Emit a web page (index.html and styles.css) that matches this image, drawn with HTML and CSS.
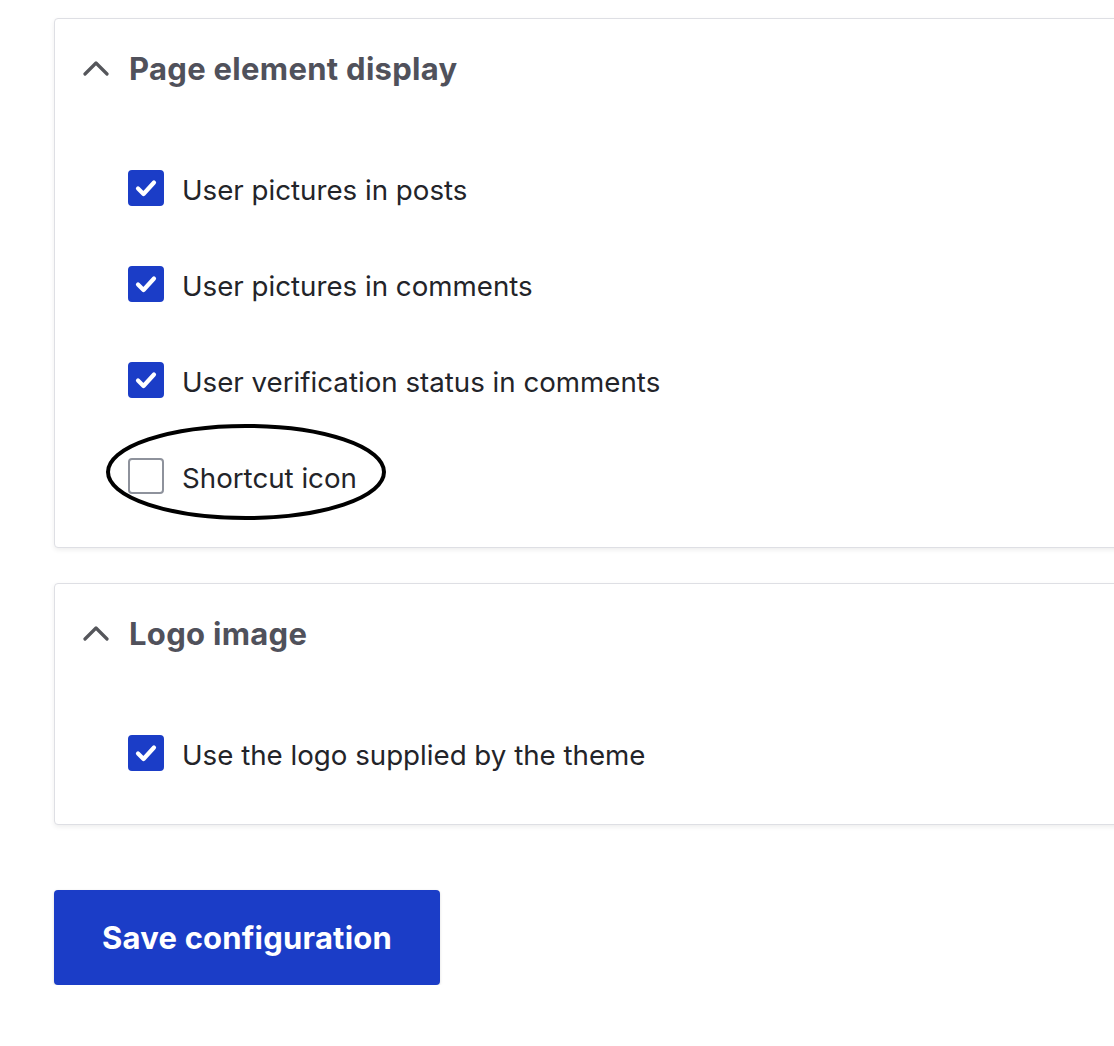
FILE: index.html
```html
<!DOCTYPE html>
<html lang="en">
<head>
<meta charset="utf-8">
<title>Appearance settings</title>
<link rel="stylesheet" href="styles.css">
</head>
<body>
<main class="page">
  <section class="panel">
    <div class="summary">
      <svg class="chevron" width="26" height="16" viewBox="0 0 26 16" aria-hidden="true"><path d="M2 14 L13 3 L24 14" fill="none" stroke="#55565b" stroke-width="3.2" stroke-linecap="round" stroke-linejoin="round"/></svg>
      <h2 class="title">Page element display</h2>
    </div>
    <div class="content">
      <label class="row"><span class="box checked"><svg width="22" height="18" viewBox="0 0 22 18"><path d="M3 9.5 L8.5 15 L19 3.5" fill="none" stroke="#fff" stroke-width="4.2" stroke-linecap="round" stroke-linejoin="round"/></svg></span><span class="label">User pictures in posts</span></label>
      <label class="row"><span class="box checked"><svg width="22" height="18" viewBox="0 0 22 18"><path d="M3 9.5 L8.5 15 L19 3.5" fill="none" stroke="#fff" stroke-width="4.2" stroke-linecap="round" stroke-linejoin="round"/></svg></span><span class="label">User pictures in comments</span></label>
      <label class="row"><span class="box checked"><svg width="22" height="18" viewBox="0 0 22 18"><path d="M3 9.5 L8.5 15 L19 3.5" fill="none" stroke="#fff" stroke-width="4.2" stroke-linecap="round" stroke-linejoin="round"/></svg></span><span class="label">User verification status in comments</span></label>
      <label class="row annotated"><span class="box"></span><span class="label">Shortcut icon</span>
        <svg class="circle" width="284" height="100" viewBox="0 0 284 100" aria-hidden="true"><ellipse cx="142" cy="50" rx="138" ry="46" fill="none" stroke="#000" stroke-width="4"/></svg>
      </label>
    </div>
  </section>

  <section class="panel">
    <div class="summary">
      <svg class="chevron" width="26" height="16" viewBox="0 0 26 16" aria-hidden="true"><path d="M2 14 L13 3 L24 14" fill="none" stroke="#55565b" stroke-width="3.2" stroke-linecap="round" stroke-linejoin="round"/></svg>
      <h2 class="title">Logo image</h2>
    </div>
    <div class="content">
      <label class="row"><span class="box checked"><svg width="22" height="18" viewBox="0 0 22 18"><path d="M3 9.5 L8.5 15 L19 3.5" fill="none" stroke="#fff" stroke-width="4.2" stroke-linecap="round" stroke-linejoin="round"/></svg></span><span class="label">Use the logo supplied by the theme</span></label>
    </div>
  </section>

  <div class="actions">
    <button class="save" type="button">Save configuration</button>
  </div>
</main>
</body>
</html>
```

FILE: styles.css
```css
html, body {
  margin: 0;
  padding: 0;
  background: #fff;
  overflow: hidden;
}
body {
  font-family: Inter, "Noto Sans", "Liberation Sans", sans-serif;
  color: #232429;
}
.page {
  padding: 18px 0 0 54px;
  width: 1100px;
  display: flex;
  flex-direction: column;
}
.panel {
  border: 1px solid #dedfe4;
  border-radius: 4px;
  box-shadow: 0 2px 5px rgba(0, 0, 0, 0.07);
  background: #fff;
  margin-bottom: 35px;
}
.summary {
  display: flex;
  align-items: center;
  gap: 20px;
  padding: 32px 0 0 28px;
  height: 36px;
  box-sizing: content-box;
}
.chevron {
  flex: none;
  margin-top: -2px;
}
.title {
  margin: 0;
  font-size: 31px;
  line-height: 36px;
  font-weight: 700;
  color: #50515b;
  letter-spacing: 0.3px;
}
.content {
  padding: 53px 0 23px 73px;
  display: flex;
  flex-direction: column;
}
.row {
  height: 96px;
  display: flex;
  align-items: center;
  gap: 18px;
  position: relative;
}
.box {
  width: 36px;
  height: 36px;
  box-sizing: border-box;
  border: 2px solid #8e929c;
  border-radius: 4px;
  display: flex;
  align-items: center;
  justify-content: center;
  flex: none;
}
.box.checked {
  background: #1b3dc7;
  border-color: #1b3dc7;
}
.label {
  font-size: 27.7px;
  line-height: 36px;
  color: #232429;
  position: relative;
  top: 2px;
}
.circle {
  position: absolute;
  left: -24px;
  top: -6px;
}
.actions {
  padding-top: 30px;
}
.save {
  width: 386px;
  height: 95px;
  border: 0;
  border-radius: 4px;
  background: #1b3dc7;
  color: #fff;
  font-family: Inter, "Noto Sans", "Liberation Sans", sans-serif;
  font-size: 31px;
  font-weight: 700;
  letter-spacing: 0.2px;
  box-shadow: 0 1px 3px rgba(0, 0, 0, 0.15);
  cursor: pointer;
}
```
